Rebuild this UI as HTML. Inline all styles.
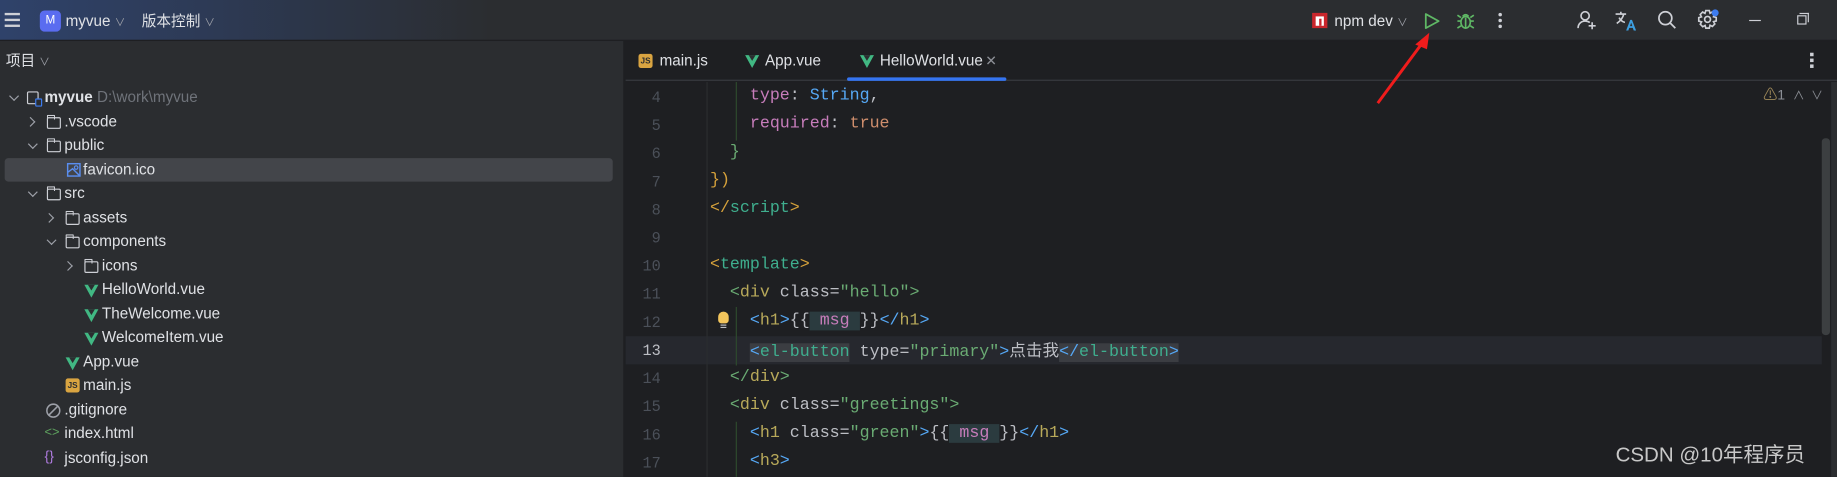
<!DOCTYPE html>
<html><head><meta charset="utf-8"><style>
*{margin:0;padding:0;box-sizing:border-box}
html,body{width:1837px;height:476px;overflow:hidden;background:#1e1f22}
#w{position:absolute;left:0;top:0;width:1568px;height:406.3px;transform:scale(1.17156);transform-origin:0 0;font-family:"Liberation Sans","Noto Sans CJK SC",sans-serif;color:#dfe1e5;font-size:13px}
.a{position:absolute;white-space:nowrap}
#title{left:0;top:0;width:1568px;height:35px;background:linear-gradient(90deg,#2f426a 0,#2d3a55 180px,#2b2d30 420px);border-bottom:1px solid #1e1f22}
#left{left:0;top:35px;width:533px;height:372px;background:#2b2d30;border-right:1px solid #1e1f22}
.row{position:absolute;height:20px;line-height:20px;font-size:13px;color:#dfe1e5}
.chev{position:absolute;width:6px;height:6px;border-right:1.3px solid #9da0a8;border-bottom:1.3px solid #9da0a8}
.cd{transform:rotate(45deg)}
.cr{transform:rotate(-45deg)}
.fold{position:absolute;width:12px;height:10px;border:1.2px solid #ced0d6;border-radius:1.5px}
.fold:before{content:"";position:absolute;left:-1.2px;top:-3px;width:5px;height:3px;border:1.2px solid #ced0d6;border-bottom:none;border-radius:1px 1px 0 0}
.vue{position:absolute;width:0;height:0;border-left:6.5px solid transparent;border-right:6.5px solid transparent;border-top:11px solid #41b883}
.vue:after{content:"";position:absolute;left:-3px;top:-11px;border-left:3px solid transparent;border-right:3px solid transparent;border-top:5px solid #2b2d30}
.js{position:absolute;width:12px;height:12px;background:#d9a441;border-radius:2px;color:#2b2d30;font-size:7px;font-weight:bold;line-height:14px;text-align:center;font-family:"Liberation Sans",sans-serif}
#code{left:534px;top:70px;width:1034px;height:337px;background:#1e1f22}
.ln{position:absolute;left:534px;width:30px;text-align:right;font-family:"Liberation Mono",monospace;font-size:13px;color:#4b5059}
.cl{position:absolute;left:606px;font-family:"Liberation Mono","Noto Sans CJK SC",monospace;font-size:14.2px;white-space:pre;color:#bcbec4}
.g{color:#6aab73}.b{color:#56a8f5}.o{color:#d5a13b}.t{color:#3fae8e}.p{color:#c77dbb}.r{color:#cf8e6d}.y{color:#b8a95a}
.hl{background:#3b3d42}.hm{background:#2b3b3f}
</style></head><body><div id="w">
<div id="title" class="a"></div>
<div class="a" style="left:4px;top:11px;width:13px;height:2px;background:#ced0d6;box-shadow:0 5px 0 #ced0d6,0 10px 0 #ced0d6"></div>
<div class="a" style="left:34px;top:9px;width:18px;height:18px;background:#5a6cf0;border-radius:4px;color:#fff;font-size:10px;text-align:center;line-height:18px">M</div>
<div class="a" style="left:56px;top:9px;font-size:13px;line-height:18px">myvue <span style="font-size:9px;color:#9da0a8">&#8744;</span></div>
<div class="a" style="left:121px;top:9px;font-size:12.5px;line-height:18px">版本控制 <span style="font-size:9px;color:#9da0a8">&#8744;</span></div>
<div class="a" style="left:1120px;top:11px;width:13px;height:13px;background:#c9262c"><div style="position:absolute;left:3px;top:3px;width:7px;height:8px;background:#fff"></div><div style="position:absolute;left:5.5px;top:5px;width:2px;height:6px;background:#c9262c"></div></div>
<div class="a" style="left:1139px;top:9px;font-size:13px;line-height:18px">npm dev <span style="font-size:9px;color:#9da0a8">&#8744;</span></div>
<svg class="a" style="left:1214px;top:10px" width="16" height="16"><path d="M3 2 L14 8 L3 14 Z" fill="none" stroke="#5fb865" stroke-width="1.5" stroke-linejoin="round"/></svg>
<svg class="a" style="left:1243px;top:9px" width="16" height="17"><g fill="none" stroke="#5fb865" stroke-width="1.4"><ellipse cx="8" cy="10" rx="4" ry="5"/><path d="M5.5 5 Q8 2 10.5 5 M4 9H1 M15 9h-3 M4 13l-3 2 M12 13l3 2 M4 6 1 4 M12 6l3-2 M8 6v9"/></g></svg>
<div class="a" style="left:1279px;top:11px;width:2.5px;height:2.5px;background:#ced0d6;border-radius:2px;box-shadow:0 5px 0 #ced0d6,0 10px 0 #ced0d6"></div>
<svg class="a" style="left:1346px;top:8px" width="18" height="18"><g fill="none" stroke="#ced0d6" stroke-width="1.4"><circle cx="7" cy="5.5" r="3.5"/><path d="M1 16c0-4 3-6 6-6 2 0 3 .5 4 1.2 M13 11v6 M10 14h6"/></g></svg>
<svg class="a" style="left:1378px;top:8px" width="20" height="20"><g fill="none" stroke="#ced0d6" stroke-width="1.4"><path d="M1 4h9 M5.5 2v2 M8 4c-1 4-3 6-6 8 M4 7c1 2 3 4 5 4"/></g><path d="M10 18l3.5-9h1.5l3.5 9h-2l-.8-2.2h-3l-.8 2.2z M13.3 14.3h2l-1-3z" fill="#3d9fe0"/></svg>
<svg class="a" style="left:1414px;top:8px" width="18" height="18"><g fill="none" stroke="#ced0d6" stroke-width="1.5"><circle cx="7.5" cy="7.5" r="5.5"/><path d="M11.5 11.5 16 16"/></g></svg>
<svg class="a" style="left:1448px;top:7px" width="20" height="20"><g fill="none" stroke="#ced0d6" stroke-width="1.4"><path d="M8 2h3l.6 2.3 2-1.1 2.1 2.1-1.1 2 2.3.6v3l-2.3.6 1.1 2-2.1 2.1-2-1.1L11 17H8l-.6-2.3-2 1.1-2.1-2.1 1.1-2L2 11V8l2.3-.6-1.1-2 2.1-2.1 2 1.1z"/><circle cx="9.5" cy="9.5" r="2.5"/></g><circle cx="16" cy="4" r="3" fill="#3d7cf0"/></svg>
<div class="a" style="left:1493px;top:17px;width:10px;height:1.3px;background:#ced0d6"></div>
<div class="a" style="left:1534px;top:13px;width:8px;height:8px;border:1.3px solid #ced0d6"></div>
<div class="a" style="left:1536px;top:11px;width:8px;height:8px;border-top:1.3px solid #ced0d6;border-right:1.3px solid #ced0d6"></div>

<div id="left" class="a"></div>
<div class="a" style="left:5px;top:43px;font-size:12.5px;line-height:18px">项目 <span style="font-size:9px;color:#9da0a8">&#8744;</span></div>
<div class="a" style="left:4px;top:135px;width:519px;height:20px;background:#43454a;border-radius:3px"></div>
<div class="chev cd a" style="left:9px;top:79px"></div>
<div class="a" style="left:23px;top:78px;width:10px;height:11px;border:1.2px solid #ced0d6;border-radius:1.5px"></div><div class="a" style="left:30px;top:84px;width:6px;height:7px;border:1.2px solid #3d7cf0;border-radius:1px;background:#2b2d30"></div>
<div class="row" style="left:38px;top:73px"><b>myvue</b> <span style="color:#6f737a">D:\work\myvue</span></div>
<div class="chev cr a" style="left:23px;top:101px"></div><div class="fold" style="left:40px;top:100px"></div><div class="row" style="left:55px;top:94px">.vscode</div>
<div class="chev cd a" style="left:25px;top:120px"></div><div class="fold" style="left:40px;top:120px"></div><div class="row" style="left:55px;top:114px">public</div>
<svg class="a" style="left:57px;top:139px" width="12" height="12"><rect x=".7" y=".7" width="10.6" height="10.6" fill="none" stroke="#5a8ef0" stroke-width="1.3"/><path d="M1 8l4-3 6 6" fill="none" stroke="#5a8ef0" stroke-width="1.2"/><circle cx="8" cy="4" r="1.5" fill="none" stroke="#5a8ef0"/></svg>
<div class="row" style="left:71px;top:135px">favicon.ico</div>
<div class="chev cd a" style="left:25px;top:161px"></div><div class="fold" style="left:40px;top:161px"></div><div class="row" style="left:55px;top:155px">src</div>
<div class="chev cr a" style="left:39px;top:183px"></div><div class="fold" style="left:56px;top:182px"></div><div class="row" style="left:71px;top:176px">assets</div>
<div class="chev cd a" style="left:41px;top:202px"></div><div class="fold" style="left:56px;top:202px"></div><div class="row" style="left:71px;top:196px">components</div>
<div class="chev cr a" style="left:55px;top:224px"></div><div class="fold" style="left:72px;top:223px"></div><div class="row" style="left:87px;top:217px">icons</div>
<div class="vue" style="left:72px;top:243px"></div><div class="row" style="left:87px;top:237px">HelloWorld.vue</div>
<div class="vue" style="left:72px;top:264px"></div><div class="row" style="left:87px;top:258px">TheWelcome.vue</div>
<div class="vue" style="left:72px;top:284px"></div><div class="row" style="left:87px;top:278px">WelcomeItem.vue</div>
<div class="vue" style="left:56px;top:305px"></div><div class="row" style="left:71px;top:299px">App.vue</div>
<div class="js" style="left:56px;top:323px">JS</div><div class="row" style="left:71px;top:319px">main.js</div>
<svg class="a" style="left:39px;top:344px" width="13" height="13"><circle cx="6.5" cy="6.5" r="5.5" fill="none" stroke="#9da0a8" stroke-width="1.3"/><path d="M2.7 10.3 10.3 2.7" stroke="#9da0a8" stroke-width="1.3"/></svg><div class="row" style="left:55px;top:340px">.gitignore</div>
<div class="a" style="left:38px;top:362px;font-size:11px;color:#5fa35f;line-height:14px">&lt;&gt;</div><div class="row" style="left:55px;top:360px">index.html</div>
<div class="a" style="left:38px;top:382px;font-size:12px;color:#b07ce0;line-height:14px">{}</div><div class="row" style="left:55px;top:381px">jsconfig.json</div>

<div id="code" class="a"></div>
<div class="a" style="left:534px;top:68px;width:1034px;height:1px;background:#393b40"></div>
<div class="js" style="left:545px;top:46px">JS</div><div class="a" style="left:563px;top:43px;line-height:18px">main.js</div>
<div class="vue" style="left:636px;top:47px"></div><div class="a" style="left:653px;top:43px;line-height:18px">App.vue</div>
<div class="vue" style="left:734px;top:47px"></div><div class="a" style="left:751px;top:43px;line-height:18px">HelloWorld.vue</div>
<div class="a" style="left:841px;top:43px;line-height:18px;color:#8c8f96;font-size:12px">✕</div>
<div class="a" style="left:723px;top:66px;width:136px;height:3px;background:#3574f0;border-radius:2px"></div>
<div class="a" style="left:1545px;top:45px;width:2.5px;height:2.5px;background:#ced0d6;box-shadow:0 5px 0 #ced0d6,0 10px 0 #ced0d6"></div>
<div class="a" style="left:1505px;top:73px;font-size:12px;line-height:16px;color:#a08a5a">⚠<span style="color:#8c8f96">1 &nbsp;<span style="font-size:10px">∧ &nbsp;∨</span></span></div>
<div class="a" style="left:534px;top:287px;width:1021px;height:24px;background:#26282e"></div>
<div class="a" style="left:603px;top:70px;width:1px;height:337px;background:#2b2d30"></div>
<div class="a" style="left:628px;top:70px;width:1px;height:50px;background:#2d4a2d"></div>
<div class="a" style="left:628px;top:262px;width:1px;height:50px;background:#2d4a2d"></div>
<div class="a" style="left:628px;top:360px;width:1px;height:47px;background:#2d4a2d"></div>
<div class="a" style="left:1555px;top:118px;width:7px;height:168px;background:#3c3f41;border-radius:3px"></div>
<div class="a" style="left:1563px;top:70px;width:5px;height:337px;background:#2b2d30"></div>

<div class="ln" style="top:76px">4</div><div class="ln" style="top:100px">5</div><div class="ln" style="top:124px">6</div><div class="ln" style="top:148px">7</div><div class="ln" style="top:172px">8</div><div class="ln" style="top:196px">9</div><div class="ln" style="top:220px">10</div><div class="ln" style="top:244px">11</div><div class="ln" style="top:268px">12</div><div class="ln" style="top:292px;color:#bcbec4">13</div><div class="ln" style="top:316px">14</div><div class="ln" style="top:340px">15</div><div class="ln" style="top:364px">16</div><div class="ln" style="top:388px">17</div>

<div class="cl" style="top:74px">    <span class="p">type</span>: <span class="b">String</span>,</div>
<div class="cl" style="top:98px">    <span class="p">required</span>: <span class="r">true</span></div>
<div class="cl" style="top:122px">  <span class="g">}</span></div>
<div class="cl" style="top:146px"><span class="o">})</span></div>
<div class="cl" style="top:170px"><span class="o">&lt;/</span><span class="t">script</span><span class="o">&gt;</span></div>
<div class="cl" style="top:218px"><span class="o">&lt;</span><span class="t">template</span><span class="o">&gt;</span></div>
<div class="cl" style="top:242px">  <span class="g">&lt;</span><span class="y">div</span> class=<span class="g">"hello"</span><span class="g">&gt;</span></div>
<div class="cl" style="top:266px">    <span class="b">&lt;</span><span class="y">h1</span><span class="b">&gt;</span>{{<span class="hm"> <span class="p">msg</span> </span>}}<span class="b">&lt;/</span><span class="y">h1</span><span class="b">&gt;</span></div>
<div class="cl" style="top:289px">    <span class="hl"><span class="b">&lt;</span><span class="t">el-button</span></span> type=<span class="g">"primary"</span><span class="b">&gt;</span>点击我<span class="hl"><span class="b">&lt;/</span><span class="t">el-button</span><span class="b">&gt;</span></span></div>
<div class="cl" style="top:314px">  <span class="g">&lt;/</span><span class="y">div</span><span class="g">&gt;</span></div>
<div class="cl" style="top:338px">  <span class="g">&lt;</span><span class="y">div</span> class=<span class="g">"greetings"</span><span class="g">&gt;</span></div>
<div class="cl" style="top:362px">    <span class="b">&lt;</span><span class="y">h1</span> class=<span class="g">"green"</span><span class="b">&gt;</span>{{<span class="hm"> <span class="p">msg</span> </span>}}<span class="b">&lt;/</span><span class="y">h1</span><span class="b">&gt;</span></div>
<div class="cl" style="top:386px">    <span class="b">&lt;</span><span class="y">h3</span><span class="b">&gt;</span></div>
<div class="a" style="left:613px;top:266px;width:9px;height:10px;background:#f2c55c;border-radius:5px 5px 3px 3px"></div>
<div class="a" style="left:615px;top:277px;width:5px;height:3px;border-top:1px solid #bcbec4;border-bottom:1px solid #bcbec4"></div>

<svg class="a" style="left:1170px;top:20px" width="60" height="72"><path d="M6 68 L46 14" stroke="#f01c1c" stroke-width="2.5"/><path d="M50 8 L38 18 L48 22 Z" fill="#f01c1c"/></svg>
<div class="a" style="left:1379px;top:377px;font-size:17.5px;color:#c8c8c8;line-height:22px">CSDN @10年程序员</div>
</div></body></html>
